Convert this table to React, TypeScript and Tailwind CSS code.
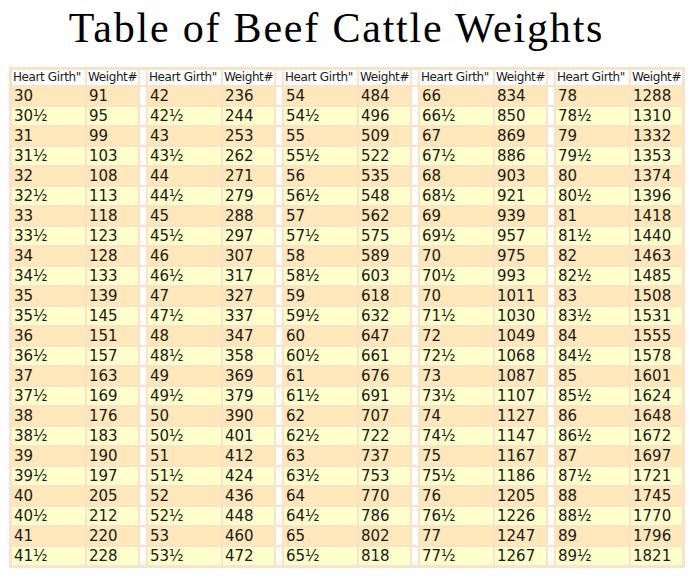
import React from "react";

const groups: { start: number; w: number[] }[] = [
  { start: 30, w: [91,95,99,103,108,113,118,123,128,133,139,145,151,157,163,169,176,183,190,197,205,212,220,228] },
  { start: 42, w: [236,244,253,262,271,279,288,297,307,317,327,337,347,358,369,379,390,401,412,424,436,448,460,472] },
  { start: 54, w: [484,496,509,522,535,548,562,575,589,603,618,632,647,661,676,691,707,722,737,753,770,786,802,818] },
  { start: 66, w: [834,850,869,886,903,921,939,957,975,993,1011,1030,1049,1068,1087,1107,1127,1147,1167,1186,1205,1226,1247,1267] },
  { start: 78, w: [1288,1310,1332,1353,1374,1396,1418,1440,1463,1485,1508,1531,1555,1578,1601,1624,1648,1672,1697,1721,1745,1770,1796,1821] },
];

function girth(g: number, i: number): string {
  if (g === 3 && i === 10) return "70";
  const base = groups[g].start + Math.floor(i / 2);
  return i % 2 === 0 ? String(base) : base + "½";
}

export default function App() {
  const rows = Array.from({ length: 24 }, (_, i) => i);
  return (
    <div className="w-[692px] h-[578px] bg-white overflow-hidden" style={{ fontFamily: '"DejaVu Sans", Verdana, sans-serif' }}>
      <h1
        className="w-[673px] text-center text-[42px] leading-[48px] pt-[4px] h-[67px] text-black tracking-[1.8px]"
        style={{ fontFamily: '"Liberation Serif", Georgia, serif' }}
      >
        Table of Beef Cattle Weights
      </h1>
      <div className="pl-[9px]">
        <table className="w-[675px] border-separate border-spacing-[2px] bg-[#fae2cb] border border-[#fae2cb] table-fixed text-[#1a1a1a]">
          <colgroup>
            {groups.map((_, g) => (
              <React.Fragment key={g}>
                <col className="w-[73px]" />
                <col className="w-[51px]" />
                {g < 4 && <col className="w-[6px]" />}
              </React.Fragment>
            ))}
          </colgroup>
          <tbody>
            <tr className="h-[15px]">
              {groups.map((_, g) => (
                <React.Fragment key={g}>
                  <td className="bg-white p-0 pl-[1px] text-[12px] tracking-[-0.4px] leading-[15px] whitespace-nowrap overflow-hidden">Heart Girth"</td>
                  <td className="bg-white p-0 pl-[1px] text-[12px] tracking-[-0.4px] leading-[15px] whitespace-nowrap overflow-hidden">Weight#</td>
                  {g < 4 && <td className="bg-white p-0" />}
                </React.Fragment>
              ))}
            </tr>
            {rows.map((i) => {
              const bg = i % 2 === 0 ? "bg-[#fee8b9]" : "bg-[#ffffcc]";
              return (
                <tr key={i} className="h-[18px]">
                  {groups.map((grp, g) => (
                    <React.Fragment key={g}>
                      <td className={`${bg} p-0 pl-[2px] text-[15px] leading-[18px] whitespace-nowrap`}>{girth(g, i)}</td>
                      <td className={`${bg} p-0 pl-[2px] text-[15px] leading-[18px] whitespace-nowrap`}>{grp.w[i]}</td>
                      {g < 4 && <td className="bg-white p-0" />}
                    </React.Fragment>
                  ))}
                </tr>
              );
            })}
          </tbody>
        </table>
      </div>
    </div>
  );
}
